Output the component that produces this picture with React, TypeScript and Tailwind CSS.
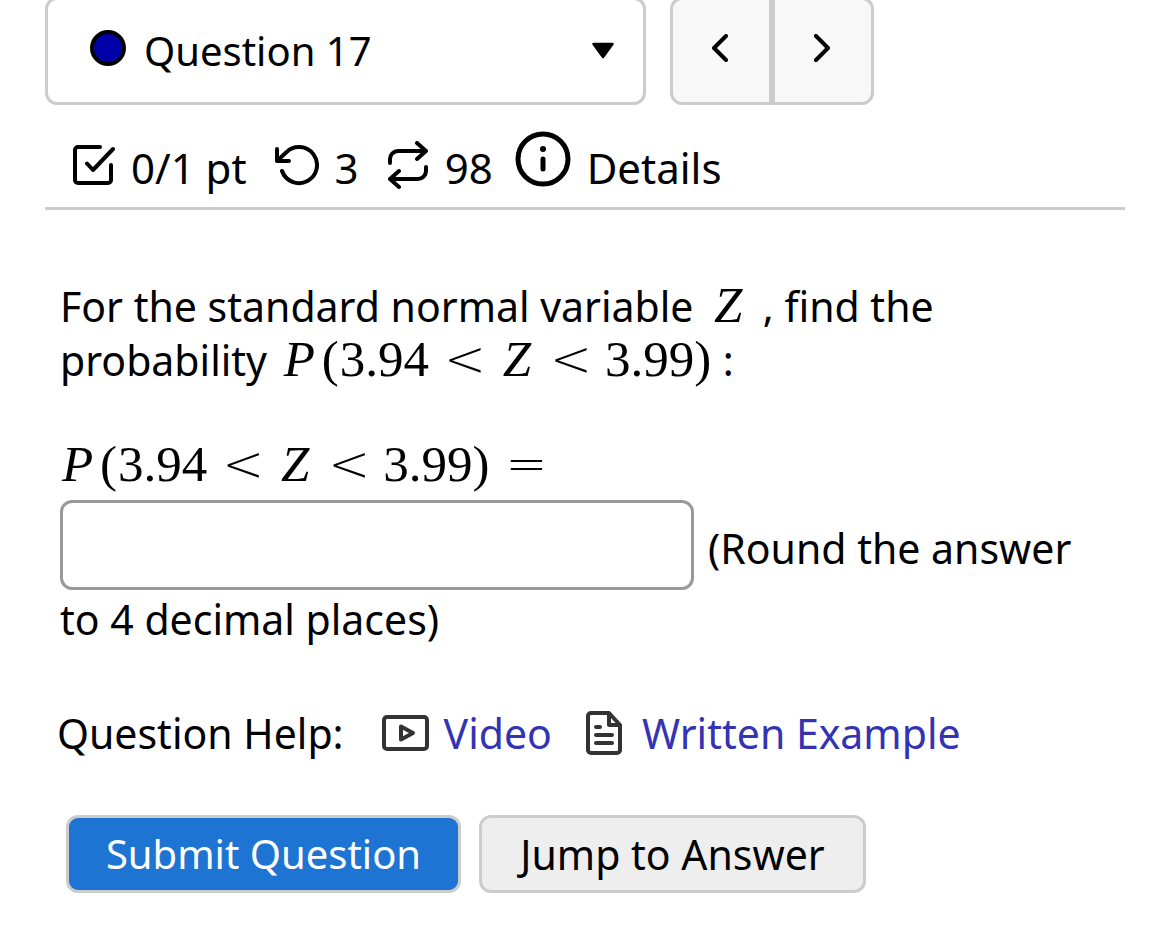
import React from "react";

function MathOp({ children }: { children: string }) {
  return (
    <span className="mx-[15px] inline-block w-10 text-center font-['DejaVu_Sans',sans-serif] text-[50px] leading-none font-extralight">
      {children}
    </span>
  );
}

function MathZ() {
  return <i className="inline-block w-9 text-center font-['Liberation_Serif',serif] text-[51px] leading-none">Z</i>;
}

function Probability() {
  return (
    <span className="whitespace-nowrap font-['Liberation_Serif',serif] text-[51px] leading-none">
      <i className="inline-block w-10 pl-[2px]">P</i>
      <span className="inline-block w-[18px]">(</span>
      <span>3.94</span>
      <MathOp>&lt;</MathOp>
      <MathZ />
      <MathOp>&lt;</MathOp>
      <span>3.99</span>
      <span className="inline-block w-[18px]">)</span>
    </span>
  );
}

function CheckSquareIcon() {
  return (
    <svg width="42" height="42" viewBox="0 0 42 42" fill="none" stroke="currentColor" strokeWidth="4" strokeLinecap="round" strokeLinejoin="round" aria-hidden="true">
      <path d="M27 2H5a3 3 0 0 0-3 3v30a3 3 0 0 0 3 3h30a3 3 0 0 0 3-3V20" />
      <path d="M14 18.5l6 6.5L40 4" />
    </svg>
  );
}

function UndoIcon() {
  return (
    <svg width="44" height="42" viewBox="0 0 44 42" fill="none" stroke="currentColor" strokeWidth="4" strokeLinecap="round" strokeLinejoin="round" aria-hidden="true">
      <path d="M2 4v12h12M2 16L11.3 7.3A18 18 0 1 1 7 26" />
    </svg>
  );
}

function RepeatIcon() {
  return (
    <svg width="42" height="50" viewBox="0 0 42 50" fill="none" stroke="currentColor" strokeWidth="4" strokeLinecap="round" strokeLinejoin="round" aria-hidden="true">
      <path d="M3 22v-4a8 8 0 0 1 8-8h28M30 2l9 8-9 8M39 26v4a8 8 0 0 1-8 8H3M12 30l-9 8 9 8" />
    </svg>
  );
}

function InfoIcon() {
  return (
    <svg width="56" height="56" viewBox="0 0 56 56" fill="none" stroke="currentColor" strokeWidth="5" strokeLinecap="round" aria-hidden="true">
      <circle cx="28" cy="28" r="25" />
      <path d="M28 28v10" />
      <circle cx="28" cy="18" r="3" fill="currentColor" stroke="none" />
    </svg>
  );
}

function ChevronIcon({ flip = false }: { flip?: boolean }) {
  return (
    <svg width="18" height="28" viewBox="0 0 18 28" fill="none" stroke="currentColor" strokeWidth="4" strokeLinecap="round" strokeLinejoin="round" aria-hidden="true">
      <path d={flip ? "M2 2l12 12L2 26" : "M14 2L2 14l12 12"} />
    </svg>
  );
}

function VideoIcon() {
  return (
    <svg width="48" height="36" viewBox="0 0 48 36" fill="none" stroke="#333" strokeWidth="4" strokeLinejoin="round" aria-hidden="true">
      <rect x="2" y="2" width="43" height="32" rx="3" />
      <path d="M19 11.5v13l12-6.5z" />
    </svg>
  );
}

function DocumentIcon() {
  return (
    <svg width="36" height="44" viewBox="0 0 36 44" fill="none" stroke="#333" strokeWidth="4" strokeLinecap="round" strokeLinejoin="round" aria-hidden="true">
      <path d="M5 2h18l11 12v25a3 3 0 0 1-3 3H5a3 3 0 0 1-3-3V5a3 3 0 0 1 3-3zM23 2v12h11M10 16h4M10 24h16M10 32h16" />
    </svg>
  );
}

export default function App() {
  return (
    <div className="overflow-hidden bg-white px-[45px] pb-9 font-['Noto_Sans',sans-serif] text-[41px] leading-[54px] text-black">
      <header className="-mt-[3px] flex gap-6 text-[40px]">
        <button type="button" aria-haspopup="listbox" className="flex h-[108px] w-[601px] items-center rounded-xl border-3 border-[#ccc] bg-white pr-7 pl-[42px] text-left">
          <span className="mr-[18px] mb-[6px] size-9 rounded-full border-4 border-black bg-[#0000a8]" />
          <span className="flex-1">Question 17</span>
          <svg width="24" height="18" viewBox="0 0 24 18" aria-hidden="true">
            <path d="M2.5 2h19L12 15z" fill="currentColor" stroke="currentColor" strokeWidth="2.5" strokeLinejoin="round" />
          </svg>
        </button>
        <nav className="flex" aria-label="Questions">
          <button type="button" aria-label="Previous question" className="flex h-[108px] w-[102px] items-center justify-center rounded-l-xl border-3 border-[#ccc] bg-[#f8f8f8] pb-[6px]">
            <ChevronIcon />
          </button>
          <button type="button" aria-label="Next question" className="flex h-[108px] w-[102px] items-center justify-center rounded-r-xl border-3 border-[#ccc] bg-[#f8f8f8] pb-[6px]">
            <ChevronIcon flip />
          </button>
        </nav>
      </header>

      <div className="flex h-[105px] items-end border-b-3 border-[#ccc] pb-3 pl-7 text-[42px]">
        <div className="flex gap-4">
          <span className="pt-1"><CheckSquareIcon /></span>
          <span>0/1 pt</span>
        </div>
        <div className="ml-7 flex gap-4">
          <span className="pt-1"><UndoIcon /></span>
          <span>3</span>
        </div>
        <div className="ml-7 flex gap-4">
          <RepeatIcon />
          <span>98</span>
        </div>
        <button type="button" className="ml-[22px] flex gap-4">
          <span className="-mt-[10px]"><InfoIcon /></span>
          <span>Details</span>
        </button>
      </div>

      <main className="pt-[69px]">
        <p className="pl-[15px]">
          For the standard normal variable <span className="mx-[6px]"><MathZ /></span> , find the
          <br />
          probability <span className="ml-1"><Probability /></span> :
        </p>
        <div className="mt-[51px] px-[15px]">
          <label htmlFor="answer" className="block">
            <Probability />
            <MathOp>=</MathOp>
          </label>
          <p className="mt-[8px]">
            <input id="answer" type="text" className="mr-[14px] mb-[2px] h-[90px] w-[634px] rounded-xl border-3 border-[#999] bg-white px-3 text-[48px]" />
            (Round the answer to 4 decimal places)
          </p>
        </div>

        <div className="mt-[60px] flex items-center pl-3">
          <span>Question Help:</span>
          <a href="#video" className="ml-[38px] flex items-center gap-[14px] text-[#3333b3]">
            <VideoIcon />
            Video
          </a>
          <a href="#example" className="ml-[34px] flex items-center gap-5 text-[#3333b3]">
            <DocumentIcon />
            Written Example
          </a>
        </div>

        <div className="mt-[55px] flex gap-[18px] pl-[21px] text-[40px]">
          <button type="button" className="h-[78px] w-[395px] rounded-xl border-3 border-[#ccc] bg-[#1e74d2] text-white">Submit Question</button>
          <button type="button" className="h-[78px] w-[387px] rounded-xl border-3 border-[#ccc] bg-[#eee] text-[41px]">Jump to Answer</button>
        </div>
      </main>
    </div>
  );
}
